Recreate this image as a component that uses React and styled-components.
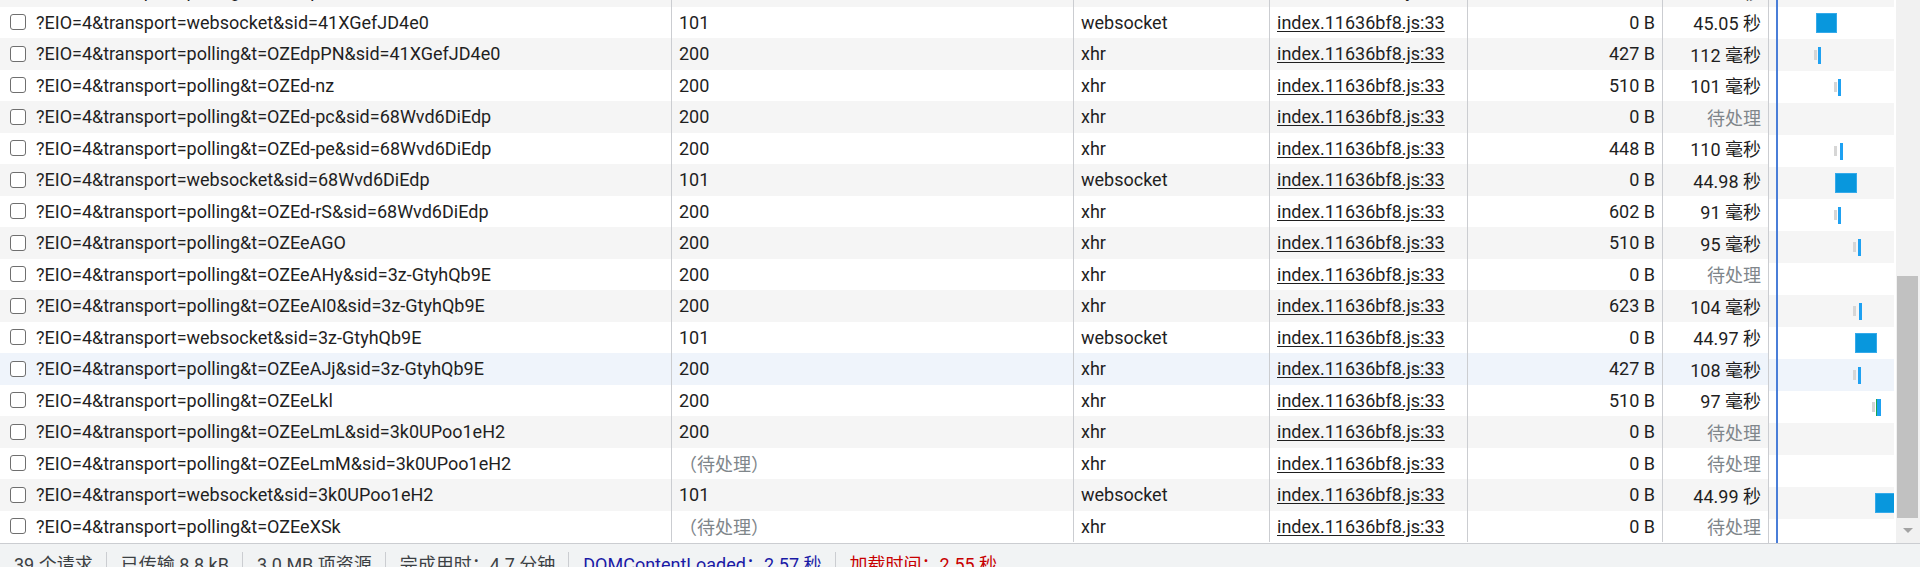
import React from "react";
import styled, { createGlobalStyle } from "styled-components";

const GlobalStyle = createGlobalStyle`
  html, body {
    margin: 0;
    padding: 0;
    background: #fff;
  }
  body {
    font-family: Roboto, "Noto Sans CJK SC", sans-serif;
    font-size: 18px;
    color: #1f1f1f;
  }
`;

const COLS = "671px 402px 196px 198px 195px 106px";

const Panel = styled.div`
  display: flex;
  flex-direction: column;
  width: 1920px;
  height: 567px;
  overflow: hidden;
`;

const Body = styled.div`
  display: flex;
  height: 543px;
  flex: none;
  overflow: hidden;
`;

const Table = styled.div`
  width: 1768px;
  flex: none;
  overflow: hidden;
`;

const rowBg = {
  white: "#ffffff",
  gray: "#f5f5f5",
  hover: "#eff4fb",
};

const Row = styled.div`
  display: grid;
  grid-template-columns: ${COLS};
  height: 31.5px;
  background: ${(p) => rowBg[p.$tone]};
  &:first-child {
    margin-top: -24.8px;
  }
`;

const Cell = styled.div`
  display: flex;
  align-items: center;
  justify-content: ${(p) => (p.$right ? "flex-end" : "flex-start")};
  padding: ${(p) => (p.$right ? "0 7px 0 0" : "0 0 0 7px")};
  border-left: ${(p) => (p.$first ? "none" : "1px solid #cbcdd1")};
  color: ${(p) => (p.$muted ? "#80868b" : "#1f1f1f")};
  white-space: nowrap;
  overflow: hidden;
`;

const NameCell = styled(Cell)`
  padding-left: 10px;
  gap: 10px;
`;

const Check = styled.span`
  width: 16px;
  height: 16px;
  box-sizing: border-box;
  border: 1.5px solid #6f6f6f;
  border-radius: 3px;
  background: #fff;
  flex: none;
`;

const Link = styled.span`
  text-decoration: underline;
  text-underline-offset: 2px;
  color: #1f1f1f;
`;

const Waterfall = styled.div`
  position: relative;
  width: 126px;
  flex: none;
  box-sizing: border-box;
  border-left: 1px solid #cbcdd1;
  overflow: hidden;
`;

const WaterRow = styled.div`
  position: relative;
  height: 32px;
  background: ${(p) => rowBg[p.$tone]};
  &:first-child {
    margin-top: -25.3px;
  }
`;

const DomLine = styled.div`
  position: absolute;
  top: 0;
  bottom: 0;
  left: 7px;
  width: 2px;
  background: #4a7ed8;
`;

const Wait = styled.span`
  position: absolute;
  top: 11px;
  height: 10px;
  width: 3px;
  background: #d6d6d6;
`;

const Bar = styled.span`
  position: absolute;
  top: 8px;
  height: 17px;
  width: ${(p) => p.$w || 3}px;
  background: ${(p) => p.$color || "#1ea1f2"};
`;

const Box = styled.span`
  position: absolute;
  top: 6px;
  height: 20px;
  box-sizing: border-box;
  width: ${(p) => p.$w}px;
  background: #0897dd;
  border: 1px solid #35aaea;
`;

const Scrollbar = styled.div`
  width: 26px;
  flex: none;
  background: #f1f1f1;
  position: relative;
  border-left: 2px solid #fff;
  box-sizing: border-box;
`;

const Thumb = styled.div`
  position: absolute;
  left: 1px;
  right: 2px;
  top: 276px;
  height: 242px;
  background: #c1c1c1;
`;

const Arrow = styled.div`
  position: absolute;
  left: 7px;
  top: 528px;
  width: 0;
  height: 0;
  border-left: 5px solid transparent;
  border-right: 5px solid transparent;
  border-top: 5px solid #a3a3a3;
`;

const Footer = styled.div`
  display: flex;
  align-items: flex-start;
  height: 40px;
  flex: none;
  box-sizing: border-box;
  padding-top: 8px;
  background: #f1f3f4;
  border-top: 1px solid #cbcdd1;
`;

const FootItem = styled.div`
  line-height: 26px;
  padding: 0 13px 0 14px;
  border-left: 1px solid #cbcdd1;
  color: ${(p) => p.$color || "#3c4043"};
  white-space: nowrap;
  &:first-child {
    border-left: none;
    padding-left: 14px;
  }
`;

const FILE = "index.11636bf8.js:33";

const rows = [
  { name: "?EIO=4&transport=polling&t=OZEdp9x&sid=41XGefJD4e0", status: "200", type: "xhr", size: "510 B", time: "98 毫秒", bars: [{ k: "bar", x: 49 }] },
  { name: "?EIO=4&transport=websocket&sid=41XGefJD4e0", status: "101", type: "websocket", size: "0 B", time: "45.05 秒", bars: [{ k: "box", x: 47, w: 21 }] },
  { name: "?EIO=4&transport=polling&t=OZEdpPN&sid=41XGefJD4e0", status: "200", type: "xhr", size: "427 B", time: "112 毫秒", bars: [{ k: "wait", x: 45 }, { k: "bar", x: 49 }] },
  { name: "?EIO=4&transport=polling&t=OZEd-nz", status: "200", type: "xhr", size: "510 B", time: "101 毫秒", bars: [{ k: "wait", x: 65 }, { k: "bar", x: 69 }] },
  { name: "?EIO=4&transport=polling&t=OZEd-pc&sid=68Wvd6DiEdp", status: "200", type: "xhr", size: "0 B", time: "待处理", pending: true },
  { name: "?EIO=4&transport=polling&t=OZEd-pe&sid=68Wvd6DiEdp", status: "200", type: "xhr", size: "448 B", time: "110 毫秒", bars: [{ k: "wait", x: 65 }, { k: "bar", x: 71 }] },
  { name: "?EIO=4&transport=websocket&sid=68Wvd6DiEdp", status: "101", type: "websocket", size: "0 B", time: "44.98 秒", bars: [{ k: "box", x: 66, w: 22 }] },
  { name: "?EIO=4&transport=polling&t=OZEd-rS&sid=68Wvd6DiEdp", status: "200", type: "xhr", size: "602 B", time: "91 毫秒", bars: [{ k: "wait", x: 65 }, { k: "bar", x: 69 }] },
  { name: "?EIO=4&transport=polling&t=OZEeAGO", status: "200", type: "xhr", size: "510 B", time: "95 毫秒", bars: [{ k: "wait", x: 84 }, { k: "bar", x: 89 }] },
  { name: "?EIO=4&transport=polling&t=OZEeAHy&sid=3z-GtyhQb9E", status: "200", type: "xhr", size: "0 B", time: "待处理", pending: true },
  { name: "?EIO=4&transport=polling&t=OZEeAI0&sid=3z-GtyhQb9E", status: "200", type: "xhr", size: "623 B", time: "104 毫秒", bars: [{ k: "wait", x: 84 }, { k: "bar", x: 90 }] },
  { name: "?EIO=4&transport=websocket&sid=3z-GtyhQb9E", status: "101", type: "websocket", size: "0 B", time: "44.97 秒", bars: [{ k: "box", x: 86, w: 22 }] },
  { name: "?EIO=4&transport=polling&t=OZEeAJj&sid=3z-GtyhQb9E", status: "200", type: "xhr", size: "427 B", time: "108 毫秒", hover: true, bars: [{ k: "wait", x: 84 }, { k: "bar", x: 89 }] },
  { name: "?EIO=4&transport=polling&t=OZEeLkl", status: "200", type: "xhr", size: "510 B", time: "97 毫秒", bars: [{ k: "wait", x: 103 }, { k: "bar", x: 107, w: 2, color: "#1fa84f" }, { k: "bar", x: 108, w: 4 }] },
  { name: "?EIO=4&transport=polling&t=OZEeLmL&sid=3k0UPoo1eH2", status: "200", type: "xhr", size: "0 B", time: "待处理", pending: true },
  { name: "?EIO=4&transport=polling&t=OZEeLmM&sid=3k0UPoo1eH2", status: "（待处理）", statusMuted: true, type: "xhr", size: "0 B", time: "待处理", pending: true },
  { name: "?EIO=4&transport=websocket&sid=3k0UPoo1eH2", status: "101", type: "websocket", size: "0 B", time: "44.99 秒", bars: [{ k: "box", x: 106, w: 22 }] },
  { name: "?EIO=4&transport=polling&t=OZEeXSk", status: "（待处理）", statusMuted: true, type: "xhr", size: "0 B", time: "待处理", pending: true },
];

const toneOf = (r, i) => (r.hover ? "hover" : i % 2 === 0 ? "gray" : "white");

const renderBar = (b, j) => {
  if (b.k === "wait") return <Wait key={j} style={{ left: b.x }} />;
  if (b.k === "box") return <Box key={j} $w={b.w} style={{ left: b.x }} />;
  return <Bar key={j} $w={b.w} $color={b.color} style={{ left: b.x }} />;
};

export default function App() {
  return (
    <>
      <GlobalStyle />
      <Panel>
        <Body>
          <Table>
            {rows.map((r, i) => (
              <Row key={i} $tone={toneOf(r, i)}>
                <NameCell $first>
                  <Check />
                  {r.name}
                </NameCell>
                <Cell $muted={r.statusMuted}>{r.status}</Cell>
                <Cell>{r.type}</Cell>
                <Cell>
                  <Link>{FILE}</Link>
                </Cell>
                <Cell $right>{r.size}</Cell>
                <Cell $right $muted={r.pending}>
                  {r.time}
                </Cell>
              </Row>
            ))}
          </Table>
          <Waterfall>
            {rows.map((r, i) => (
              <WaterRow key={i} $tone={toneOf(r, i)}>
                {(r.bars || []).map(renderBar)}
              </WaterRow>
            ))}
            <DomLine />
          </Waterfall>
          <Scrollbar>
            <Thumb />
            <Arrow />
          </Scrollbar>
        </Body>
        <Footer>
          <FootItem>39 个请求</FootItem>
          <FootItem>已传输 8.8 kB</FootItem>
          <FootItem>3.0 MB 项资源</FootItem>
          <FootItem>完成用时：4.7 分钟</FootItem>
          <FootItem $color="#1a1aa6">DOMContentLoaded：2.57 秒</FootItem>
          <FootItem $color="#c80000">加载时间：2.55 秒</FootItem>
        </Footer>
      </Panel>
    </>
  );
}
